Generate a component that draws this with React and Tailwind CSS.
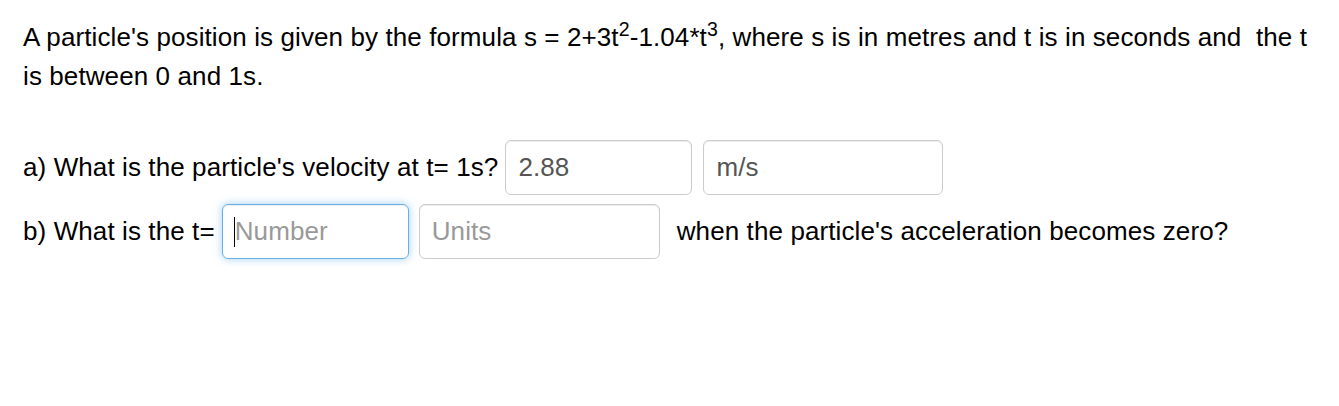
export default function App() {
  const font = { fontFamily: '"Liberation Sans", Arial, sans-serif' }
  return (
    <div className="min-h-[406px] w-[1339px] bg-white pl-[23px] pr-[23px] pt-[18px] text-[26px] leading-[39px] tracking-[0.1px] text-black" style={font}>
      <p>
        A particle's position is given by the formula s = 2+3t<sup>2</sup>-1.04*t<sup>3</sup>, where s is in metres and t is in seconds and&nbsp; the t is between 0 and 1s.
      </p>

      <div className="mt-[44px] flex items-center">
        <span>a) What is the particle's velocity at t= 1s?</span>
        <input
          readOnly
          value="2.88"
          className="ml-[7px] h-[55px] w-[187px] rounded-[6px] border border-[#ccc] px-[12px] text-[26px] text-[#555] shadow-[inset_0_1px_1px_rgba(0,0,0,0.075)] outline-none"
          style={font}
        />
        <input
          readOnly
          value="m/s"
          className="ml-[11px] h-[55px] w-[240px] rounded-[6px] border border-[#ccc] px-[12px] text-[26px] text-[#555] shadow-[inset_0_1px_1px_rgba(0,0,0,0.075)] outline-none"
          style={font}
        />
      </div>

      <div className="mt-[9px] flex items-center">
        <span>b) What is the t=</span>
        <div className="relative ml-[7px]">
          <input
            readOnly
            placeholder="Number"
            className="h-[55px] w-[187px] rounded-[6px] border border-[#66afe9] px-[12px] text-[26px] text-[#555] shadow-[inset_0_1px_1px_rgba(0,0,0,0.075),0_0_8px_rgba(102,175,233,0.6)] outline-none placeholder:text-[#999]"
            style={font}
          />
          <span className="absolute left-[12px] top-[13px] h-[30px] w-px bg-black" />
        </div>
        <input
          readOnly
          placeholder="Units"
          className="ml-[10px] h-[55px] w-[241px] rounded-[6px] border border-[#ccc] px-[12px] text-[26px] text-[#555] shadow-[inset_0_1px_1px_rgba(0,0,0,0.075)] outline-none placeholder:text-[#999]"
          style={font}
        />
        <span className="ml-[17px]">when the particle's acceleration becomes zero?</span>
      </div>
    </div>
  )
}
